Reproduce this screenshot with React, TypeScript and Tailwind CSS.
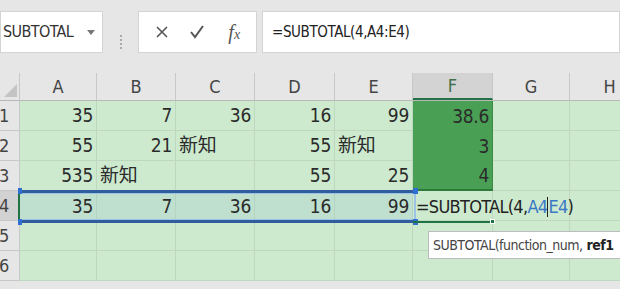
import React from 'react'

const cols = [
  { k: 'A', w: 77 },
  { k: 'B', w: 79 },
  { k: 'C', w: 79 },
  { k: 'D', w: 80 },
  { k: 'E', w: 78 },
  { k: 'F', w: 80 },
  { k: 'G', w: 77 },
  { k: 'H', w: 80 },
]

type Cell = { v: string; left?: boolean }
const rows: (Cell | null)[][] = [
  [{ v: '35' }, { v: '7' }, { v: '36' }, { v: '16' }, { v: '99' }, { v: '38.6' }, null, null],
  [{ v: '55' }, { v: '21' }, { v: '新知', left: true }, { v: '55' }, { v: '新知', left: true }, { v: '3' }, null, null],
  [{ v: '535' }, { v: '新知', left: true }, null, { v: '55' }, { v: '25' }, { v: '4' }, null, null],
  [{ v: '35' }, { v: '7' }, { v: '36' }, { v: '16' }, { v: '99' }, null, null, null],
  [null, null, null, null, null, null, null, null],
  [null, null, null, null, null, null, null, null],
]

const font = '"DejaVu Sans Condensed", "Liberation Sans", "Noto Sans CJK SC", sans-serif'

export default function App() {
  return (
    <div className="relative w-[620px] h-[289px] overflow-hidden bg-[#e6e6e6] text-[#333]" style={{ fontFamily: font }}>
      {/* formula bar */}
      <div className="flex h-[73px] pt-[11px]">
        <div className="w-[103px] h-[42px] bg-white border border-[#d4d4d4] flex items-center justify-between pl-[2px] pr-[7px]">
          <span className="text-[16px] tracking-[-0.6px] text-[#333]">SUBTOTAL</span>
          <span className="w-0 h-0 border-l-[4px] border-r-[4px] border-t-[5px] border-l-transparent border-r-transparent border-t-[#777]" />
        </div>
        <div className="w-[35px] flex items-center justify-center">
          <div className="flex flex-col gap-[2px]">
            <span className="w-[2px] h-[2px] bg-[#aaa]" />
            <span className="w-[2px] h-[2px] bg-[#aaa]" />
            <span className="w-[2px] h-[2px] bg-[#aaa]" />
            <span className="w-[2px] h-[2px] bg-[#aaa]" />
          </div>
        </div>
        <div className="w-[119px] h-[42px] bg-white border border-[#d4d4d4] flex items-center justify-around px-[6px]">
          <svg width="14" height="14" viewBox="0 0 14 14">
            <path d="M2 2 L12 12 M12 2 L2 12" stroke="#555" strokeWidth="1.6" fill="none" />
          </svg>
          <svg width="16" height="14" viewBox="0 0 16 14">
            <path d="M2 7 L6 12 L14 1" stroke="#555" strokeWidth="2" fill="none" />
          </svg>
          <span className="text-[20px] italic text-[#555] ml-[4px]" style={{ fontFamily: '"Liberation Serif", serif' }}>
            f<span className="text-[14px]">x</span>
          </span>
        </div>
        <div className="ml-[5px] flex-1 h-[42px] bg-white border border-[#d4d4d4] flex items-center pl-[9px]">
          <span className="text-[15px] tracking-[-0.4px] text-[#222]">=SUBTOTAL(4,A4:E4)</span>
        </div>
      </div>

      {/* column headers */}
      <div className="flex h-[28px] border-b border-[#b8b8b8]">
        <div className="w-[20px] shrink-0 border-r border-[#c8c8c8] flex items-end justify-end pb-[3px] pr-[2px]">
          <span className="w-0 h-0" style={{ borderBottom: '13px solid #c4c4c4', borderLeft: '13px solid transparent' }} />
        </div>
        {cols.map(c => (
          <div
            key={c.k}
            style={{ width: c.w }}
            className={
              c.k === 'F'
                ? 'shrink-0 flex items-center justify-center bg-[#d3d3d3] border-r border-[#c8c8c8] border-b-2 border-b-[#217346] text-[18px] text-[#41704c]'
                : 'shrink-0 flex items-center justify-center border-r border-[#c8c8c8] text-[18px] text-[#444]'
            }
          >
            {c.k}
          </div>
        ))}
      </div>

      {/* rows */}
      {rows.map((r, ri) => (
        <div key={ri} className="flex h-[30px]">
          <div
            className={
              ri === 3
                ? 'w-[20px] shrink-0 bg-[#d2d2d2] border-r-2 border-r-[#217346] border-b border-[#c8c8c8] flex items-center text-[18px] text-[#444] -indent-[1px]'
                : 'w-[20px] shrink-0 border-r border-b border-[#c8c8c8] flex items-center text-[18px] text-[#444] -indent-[1px]'
            }
          >
            {ri + 1}
          </div>
          {cols.map((c, ci) => {
            const cell = r[ci]
            const isF = c.k === 'F' && ri < 3
            const cls = isF
              ? 'bg-[#49a055] border-r border-[#3b8a46]' + (ri === 2 ? ' border-b-2 border-b-[#2c7a38]' : '')
              : ri === 3 && ci < 5
                ? 'bg-[#bfe0cf] border-r border-[#b4d3c0]'
                : 'bg-[#cdeacf] border-r border-b border-[#bdd8bf]'
            return (
              <div
                key={c.k}
                style={{ width: c.w }}
                className={`shrink-0 flex items-center text-[19px] tracking-[-0.3px] text-[#2b2b2b] px-[3px] ${cell?.left ? 'justify-start' : 'justify-end'} ${cls}`}
              >
                {cell?.v}
              </div>
            )
          })}
        </div>
      ))}

      {/* range selection A4:E4 */}
      <div className="absolute left-[20px] top-[190px] w-[394px] h-[33px] border-y-[3px] border-[#2f5d9e] pointer-events-none">
        <div className="absolute inset-x-0 top-0 h-[1px] bg-[#9cc3e6]" />
        <div className="absolute inset-x-0 bottom-0 h-[1px] bg-[#9cc3e6]" />
        <div className="absolute right-[-2px] top-[-3px] bottom-[-3px] w-[2px] bg-[#9cc3e6]" />
        <div className="absolute left-[-2px] top-[-5px] w-[4px] h-[6px] bg-[#2f6fd0]" />
        <div className="absolute left-[-2px] bottom-[-5px] w-[4px] h-[6px] bg-[#2f6fd0]" />
        <div className="absolute right-[-4px] top-[-5px] w-[5px] h-[6px] bg-[#2f6fd0]" />
        <div className="absolute right-[-4px] bottom-[-5px] w-[5px] h-[6px] bg-[#2f6fd0]" />
      </div>

      {/* active cell F4 editing */}
      <div className="absolute left-[416px] top-[191px] h-[31px] flex items-center text-[18px] tracking-[-0.7px] text-[#222] whitespace-nowrap">
        <span>=SUBTOTAL(4,</span>
        <span className="text-[#3a78c4]">A4</span>
        <span className="inline-block w-[1px] h-[20px] bg-[#222]" />
        <span className="text-[#3a78c4]">E4</span>
        <span>)</span>
      </div>
      <div className="absolute left-[413px] top-[221px] w-[80px] h-[2px] bg-[#217346]" />
      <div className="absolute left-[490px] top-[219px] w-[5px] h-[5px] bg-[#217346] border border-white" />

      {/* tooltip */}
      <div className="absolute left-[428px] top-[231px] w-[210px] h-[28px] bg-white border border-[#bcbcbc] flex items-center pl-[4px] text-[14px] tracking-[-0.5px] text-[#444] whitespace-nowrap">
        SUBTOTAL(function_num, <span className="font-bold text-[#222] ml-[4px]">ref1</span>
      </div>
    </div>
  )
}
